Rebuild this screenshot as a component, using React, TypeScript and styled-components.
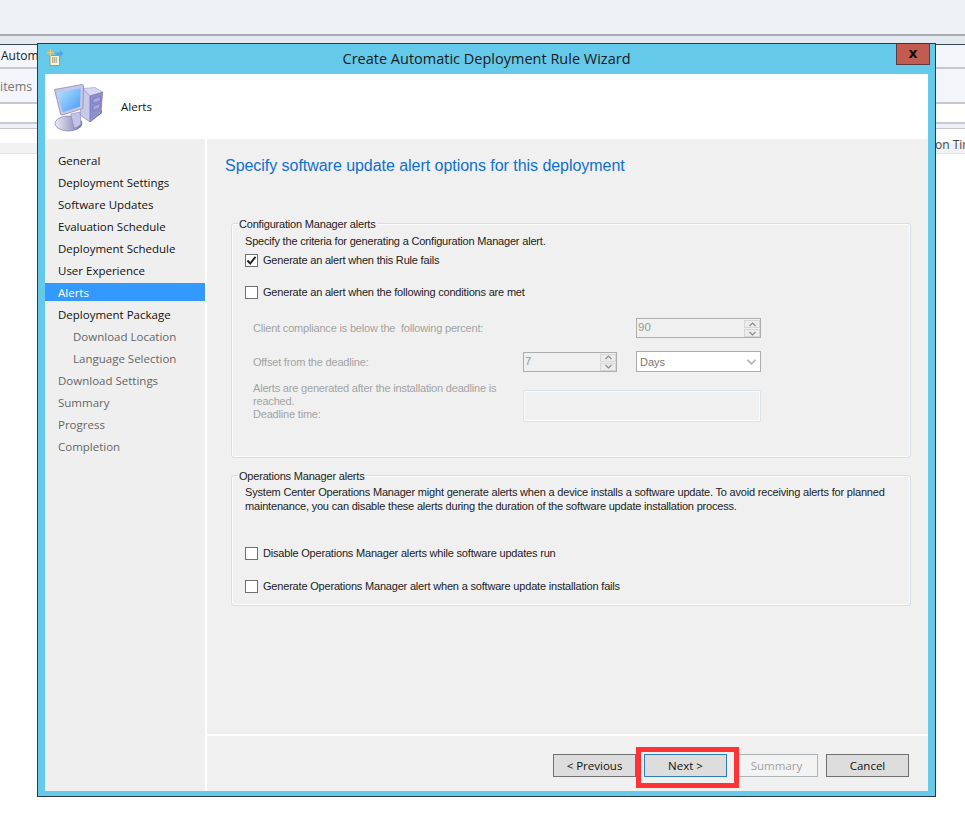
import styled, { createGlobalStyle } from "styled-components";

const GlobalStyle = createGlobalStyle`
  html, body { margin: 0; padding: 0; background: #fff; }
`

const navItems = [
  { label: "General", state: "done" },
  { label: "Deployment Settings", state: "done" },
  { label: "Software Updates", state: "done" },
  { label: "Evaluation Schedule", state: "done" },
  { label: "Deployment Schedule", state: "done" },
  { label: "User Experience", state: "done" },
  { label: "Alerts", state: "active" },
  { label: "Deployment Package", state: "done" },
  { label: "Download Location", state: "todo", sub: true },
  { label: "Language Selection", state: "todo", sub: true },
  { label: "Download Settings", state: "todo" },
  { label: "Summary", state: "todo" },
  { label: "Progress", state: "todo" },
  { label: "Completion", state: "todo" },
]

function MonitorIcon() {
  return (
    <svg width="52" height="50" viewBox="0 0 52 50">
      <defs>
        <linearGradient id="screen" x1="0" y1="0" x2="1" y2="1">
          <stop offset="0" stopColor="#b4e6ff" />
          <stop offset="1" stopColor="#4a97f5" />
        </linearGradient>
        <linearGradient id="foot" x1="0" y1="0" x2="1" y2="0">
          <stop offset="0" stopColor="#ecECf6" />
          <stop offset="1" stopColor="#7676ac" />
        </linearGradient>
      </defs>
      <path d="M26 33 L36 40 L48 31 L48 28 L36 34 Z" fill="#8585bd" />
      <path d="M29 6.500 L36 14 L36 40 L26 33 Z" fill="#c9c9ea" stroke="#8585bd" strokeWidth="0.5" />
      <path d="M29 6.500 L41 5.500 L48.700 10.200 L36 14 Z" fill="#d8d8f2" stroke="#8585bd" strokeWidth="0.5" />
      <path d="M36 14 L48.700 10.200 L47 31 L36 40 Z" fill="#8f8fd0" stroke="#6666a6" strokeWidth="0.5" />
      <path d="M39 17 L46.500 14.500 L46.200 19 L39 21.500 Z M39 24 L46 21.500 L45.800 26 L39 28.500 Z" fill="#a8a8de" stroke="#6464a4" strokeWidth="0.5" />
      <rect x="44.500" y="30" width="1.500" height="1.500" fill="#6fd06f" />
      <ellipse cx="14.500" cy="41.500" rx="13.500" ry="7.500" fill="url(#foot)" stroke="#6f6fa0" strokeWidth="0.6" />
      <path d="M16.700 32 L26 30 L27 42 Q23 46 20 46 Z" fill="#c4c4ea" stroke="#7878b0" strokeWidth="0.5" />
      <path d="M0.500 7.500 L28 2.500 Q29.500 2.500 29.500 4 L29 25 Q29 26.500 27.500 27 L8.500 33 Q7 33.500 6.500 32 Z" fill="#c6c6e6" stroke="#8080b6" strokeWidth="0.7" />
      <path d="M3.300 10.500 L26.700 6.200 L26 24.500 L8.700 30.200 Z" fill="url(#screen)" />
    </svg>
  )
}

function WizardIcon() {
  return (
    <svg width="17" height="17" viewBox="0 0 17 17">
      <path d="M3 6.500 H12.500 V16.500 H3 Z" fill="#fdf3cf" stroke="#a8986a" strokeWidth="1" />
      <path d="M5 9 H10.500 M5 11 H10.500 M5 13 H10.500" stroke="#555" strokeWidth="0.9" strokeDasharray="1.200 0.600" />
      <path d="M8.500 3.500 H13 V1 L16.500 4.500 L13 8 V5.700 H8.500 Z" fill="#4ea5e8" />
      <circle cx="3.500" cy="3.700" r="2.400" fill="#f5b23c" />
      <path d="M3.500 0.200 V7.200 M0 3.700 H7" stroke="#f7c970" strokeWidth="1" />
    </svg>
  )
}

function Spinner({ value, width }: { value: string; width: number }) {
  return (
    <SpinBox style={{ width }}>
      <SpinValue>{value}</SpinValue>
      <SpinButtons>
        <SpinButton>
          <svg width="7" height="5" viewBox="0 0 7 5"><path d="M0.500 4 L3.500 1 L6.500 4" fill="none" stroke="#8a8a8a" strokeWidth="1.200" /></svg>
        </SpinButton>
        <SpinButton>
          <svg width="7" height="5" viewBox="0 0 7 5"><path d="M0.500 1 L3.500 4 L6.500 1" fill="none" stroke="#8a8a8a" strokeWidth="1.200" /></svg>
        </SpinButton>
      </SpinButtons>
    </SpinBox>
  )
}

function Check({ checked, label, top }: { checked?: boolean; label: string; top: number }) {
  return (
    <CheckRow $top={top}>
      <CheckBox>
        {checked && (
          <svg width="11" height="11" viewBox="0 0 11 11"><path d="M1.500 5.500 L4.200 8.500 L9.500 1.800" fill="none" stroke="#222" strokeWidth="2" /></svg>
        )}
      </CheckBox>
      {label}
    </CheckRow>
  )
}

export default function App() {
  return (
    <Page>
      <GlobalStyle />
      <TopBar />
      <TopShadow />
      <TabRow>Autom</TabRow>
      <ItemsRow>items</ItemsRow>
      <BlankRow />
      <HeaderRow>on Tir</HeaderRow>
      <Window>
        <TitleBar>
          <TitleIcon><WizardIcon /></TitleIcon>
          <Title>Create Automatic Deployment Rule Wizard</Title>
          <CloseButton>x</CloseButton>
        </TitleBar>
        <Inner>
          <Banner>
            <MonitorIcon />
            <BannerText>Alerts</BannerText>
          </Banner>
          <Main>
            <Nav>
              {navItems.map(item => (
                <NavItem key={item.label} $state={item.state} $sub={item.sub}>{item.label}</NavItem>
              ))}
            </Nav>
            <Content>
              <Body>
                <Heading>Specify software update alert options for this deployment</Heading>
                <Group $height={235} $padTop={10}>
                  <Legend>Configuration Manager alerts</Legend>
                  <GroupText>Specify the criteria for generating a Configuration Manager alert.</GroupText>
                  <Check checked top={5} label="Generate an alert when this Rule fails" />
                  <Check top={18} label="Generate an alert when the following conditions are met" />
                  <Fields>
                    <FieldLabel>Client compliance is below the&nbsp; following percent:</FieldLabel>
                    <span />
                    <Spinner value="90" width={125} />
                    <FieldLabel>Offset from the deadline:</FieldLabel>
                    <Spinner value="7" width={94} />
                    <Select>
                      Days
                      <svg width="9" height="6" viewBox="0 0 9 6"><path d="M0.500 0.800 L4.500 4.800 L8.500 0.800" fill="none" stroke="#b5b5b5" strokeWidth="1.800" /></svg>
                    </Select>
                    <DeadlineLabel>
                      Alerts are generated after the installation deadline is reached.<br />Deadline time:
                    </DeadlineLabel>
                    <TimeBox />
                  </Fields>
                </Group>
                <Group $height={131} $padTop={9}>
                  <Legend>Operations Manager alerts</Legend>
                  <GroupText>
                    System Center Operations Manager might generate alerts when a device installs a software update. To avoid receiving alerts for planned maintenance, you can disable these alerts during the duration of the software update installation process.
                  </GroupText>
                  <Check top={33} label="Disable Operations Manager alerts while software updates run" />
                  <Check top={19} label="Generate Operations Manager alert when a software update installation fails" />
                </Group>
              </Body>
              <Footer>
                <Button>&lt; Previous</Button>
                <NextWrap>
                  <Button $focused>Next &gt;</Button>
                  <Highlight />
                </NextWrap>
                <Button $disabled>Summary</Button>
                <Button>Cancel</Button>
              </Footer>
            </Content>
          </Main>
        </Inner>
      </Window>
    </Page>
  )
}

const Page = styled.div`
  position: relative;
  width: 965px;
  height: 825px;
  overflow: hidden;
  background: #fff;
  font-family: "Liberation Sans", Arial, sans-serif;
`

const TopBar = styled.div`
  height: 34px;
  background: #eef1f6;
`

const TopShadow = styled.div`
  height: 10px;
  box-sizing: border-box;
  border-top: 2px solid #a9abb0;
  background: #e4e8ef;
`

const TabRow = styled.div`
  height: 23px;
  box-sizing: border-box;
  border-top: 1px solid #3b4650;
  background: #f3f5fa;
  padding: 3px 1px;
  font: 12px/16px "Open Sans", sans-serif;
  color: #222;
`

const ItemsRow = styled.div`
  height: 37px;
  box-sizing: border-box;
  border-top: 2px solid #c5c8cf;
  border-bottom: 2px solid #c5c8cf;
  background: #f3f5fa;
  padding: 9px 0 0 0;
  font: 12.5px/18px "Open Sans", sans-serif;
  color: #777;
`

const BlankRow = styled.div`
  height: 18px;
  box-sizing: content-box;
  border-bottom: 2px solid #c5c8cf;
  background: #fff;
`

const HeaderRow = styled.div`
  height: 30px;
  box-sizing: border-box;
  border-bottom: 1px solid #e3e3e3;
  background: linear-gradient(#eef0f5 0 4px, #c5c8cf 4px 5px, #fff 5px 19px, #f2f2f2 19px);
  padding: 13px 0 0 935px;
  font: 12px/16px "Open Sans", sans-serif;
  color: #444;
  white-space: nowrap;
`

/* the wizard floats over the console behind it */
const Window = styled.div`
  position: absolute;
  left: 37px;
  top: 43px;
  width: 899px;
  height: 754px;
  box-sizing: border-box;
  display: flex;
  flex-direction: column;
  background: #65c9ea;
  border: 1px solid #2a3a48;
`

const TitleBar = styled.div`
  height: 29px;
  flex: none;
  display: grid;
  grid-template-columns: 1fr auto 1fr;
  align-items: start;
`

const TitleIcon = styled.div`
  padding: 5px 0 0 9px;
  height: 17px;
`

const Title = styled.div`
  font: 14.5px/30px "Open Sans", sans-serif;
  color: #1a1a1a;
`

const CloseButton = styled.div`
  justify-self: end;
  width: 34px;
  height: 21px;
  box-sizing: border-box;
  margin-right: 5px;
  background: #c25b50;
  border: 1px solid #5d3b3a;
  border-top: none;
  text-align: center;
  font: bold 14px/19px "DejaVu Sans", sans-serif;
  color: #111;
`

const Inner = styled.div`
  flex: 1;
  display: flex;
  flex-direction: column;
  min-height: 0;
  margin: 1px 7px 5px 7px;
  background: #f0f0f0;
`

const Banner = styled.div`
  height: 65px;
  flex: none;
  display: flex;
  align-items: center;
  padding-left: 9px;
  gap: 15px;
  background: #fff;
`

const BannerText = styled.div`
  font: 11.5px/16px "Open Sans", sans-serif;
  color: #111;
`

const Main = styled.div`
  flex: 1;
  display: flex;
  min-height: 0;
`

const Nav = styled.div`
  width: 160px;
  flex: none;
  box-sizing: border-box;
  padding-top: 12px;
  display: flex;
  flex-direction: column;
  gap: 4px;
  background: #efefef;
`

const NavItem = styled.div<{ $state: string; $sub?: boolean }>`
  height: 18px;
  padding-left: ${props => props.$sub ? "28px" : "13px"};
  font: 11.5px/20px "Open Sans", sans-serif;
  color: ${props => props.$state === "todo" ? "#666" : props.$state === "active" ? "#fff" : "#111"};
  background: ${props => props.$state === "active" ? "#3399ff" : "transparent"};
`

const Content = styled.div`
  flex: 1;
  min-width: 0;
  display: flex;
  flex-direction: column;
  border-left: 2px solid #fff;
`

const Body = styled.div`
  flex: 1;
  min-height: 0;
  padding: 16px 17px 0 24px;
  display: flex;
  flex-direction: column;
  gap: 17px;
`

const Heading = styled.div`
  margin: 0 0 29px -6px;
  font: 16px/22px "Liberation Sans", Arial, sans-serif;
  letter-spacing: -0.04px;
  color: #0f6fd1;
`

const Group = styled.div<{ $height: number; $padTop: number }>`
  position: relative;
  height: ${props => props.$height}px;
  box-sizing: border-box;
  padding: ${props => props.$padTop}px 14px 0 13px;
  border: 1px solid #d5dfe6;
  border-radius: 3px;
  box-shadow: inset 0 0 0 1px #fbfbfb;
`

/* sits on the group's top border, like a legend */
const Legend = styled.div`
  position: absolute;
  left: 6px;
  top: -6px;
  padding: 0 1px;
  background: #f0f0f0;
  font: 11px/13px "Liberation Sans", Arial, sans-serif;
  letter-spacing: -0.19px;
  color: #222;
`

const GroupText = styled.div`
  font: 11px/14px "Liberation Sans", Arial, sans-serif;
  letter-spacing: -0.19px;
  color: #222;
`

const CheckRow = styled.div<{ $top: number }>`
  display: flex;
  align-items: center;
  gap: 5px;
  height: 14px;
  margin-top: ${props => props.$top}px;
  font: 11px/14px "Liberation Sans", Arial, sans-serif;
  letter-spacing: -0.19px;
  color: #222;
`

const CheckBox = styled.div`
  width: 13px;
  height: 13px;
  box-sizing: border-box;
  flex: none;
  display: flex;
  align-items: center;
  justify-content: center;
  background: #fff;
  border: 1px solid #707070;
`

const Fields = styled.div`
  display: grid;
  grid-template-columns: 270px 113px 125px;
  row-gap: 13px;
  margin: 19px 0 0 8px;
  width: 508px;
  align-items: center;
`

const FieldLabel = styled.div`
  font: 11px/14px "Liberation Sans", Arial, sans-serif;
  letter-spacing: -0.19px;
  color: #a3a3a3;
`

const DeadlineLabel = styled(FieldLabel)`
  align-self: start;
  line-height: 13px;
  width: 250px;
  margin-top: -3px;
`

const SpinBox = styled.div`
  height: 20px;
  box-sizing: border-box;
  display: flex;
  justify-content: space-between;
  border: 1px solid #adadad;
  background: #f0f0f0;
`

const SpinValue = styled.div`
  padding-left: 1px;
  font: 11.5px/17px "Liberation Sans", Arial, sans-serif;
  color: #999;
`

const SpinButtons = styled.div`
  width: 16px;
  display: flex;
  flex-direction: column;
  gap: 1px;
  padding: 1px 0 0;
`

const SpinButton = styled.div`
  flex: 1;
  display: flex;
  align-items: center;
  justify-content: center;
  background: #ececec;
  border: 1px solid #d6d6d6;
`

const Select = styled.div`
  height: 21px;
  box-sizing: border-box;
  display: flex;
  align-items: center;
  justify-content: space-between;
  padding: 0 4px 0 3px;
  border: 1px solid #adadad;
  background: #fff;
  font: 11px/14px "Liberation Sans", Arial, sans-serif;
  color: #777;
`

const TimeBox = styled.div`
  grid-column: 2 / 4;
  align-self: start;
  margin-top: 5px;
  height: 32px;
  box-sizing: border-box;
  border: 1px solid #dbe3e8;
  border-radius: 2px;
  box-shadow: inset 0 0 0 1px #fafafa;
`

const Footer = styled.div`
  height: 57px;
  flex: none;
  box-sizing: border-box;
  border-top: 2px solid #fff;
  padding: 18px 19px 0 0;
  display: flex;
  justify-content: flex-end;
  gap: 8px;
`

const NextWrap = styled.div`
  position: relative;
  width: 83px;
  height: 23px;
`

const Highlight = styled.div`
  position: absolute;
  left: -8px;
  top: -7px;
  width: 103px;
  height: 41px;
  box-sizing: border-box;
  border: 5px solid #ff3333;
  z-index: 2;
`

const Button = styled.div<{ $focused?: boolean; $disabled?: boolean }>`
  width: 83px;
  height: 23px;
  box-sizing: border-box;
  text-align: center;
  font: 11.5px/21px "Open Sans", sans-serif;
  color: ${props => props.$disabled ? "#a0a0a0" : "#111"};
  background: ${props => props.$disabled ? "#f3f3f3" : "#dddddd"};
  border: 1px solid ${props => props.$focused ? "#2f7db8" : props.$disabled ? "#adb2b5" : "#707070"};
`
